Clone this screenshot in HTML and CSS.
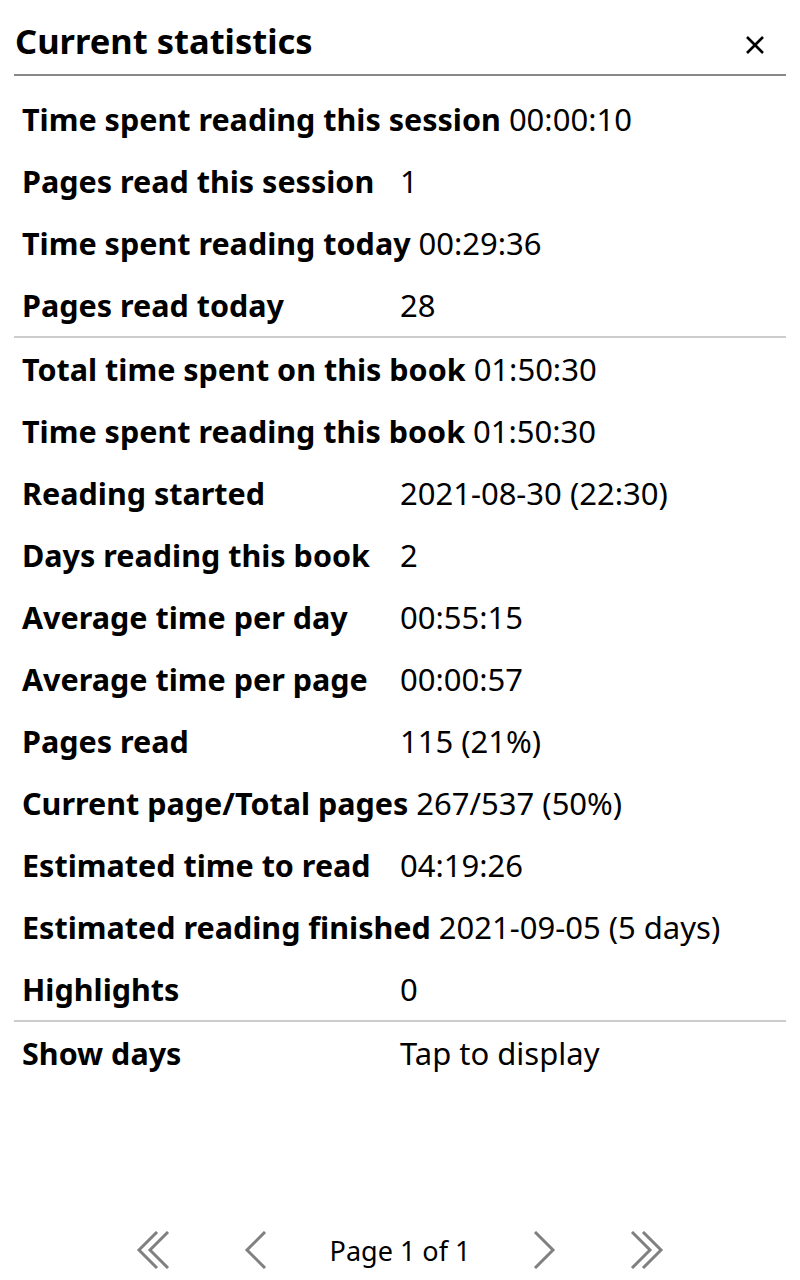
FILE: index.html
```html
<!DOCTYPE html>
<html>
<head>
<meta charset="utf-8">
<link rel="stylesheet" href="styles.css">
</head>
<body>
<div class="page">
  <div class="header">
    <div class="title">Current statistics</div>
    <div class="close">
      <svg width="20" height="20" viewBox="0 0 20 20"><path d="M2 2 L18 18 M18 2 L2 18" stroke="#000" stroke-width="2.6" fill="none"/></svg>
    </div>
  </div>
  <div class="list">
    <div class="group">
      <div class="row"><span class="label">Time spent reading this session</span><span class="value">00:00:10</span></div>
      <div class="row"><span class="label">Pages read this session</span><span class="value">1</span></div>
      <div class="row"><span class="label">Time spent reading today</span><span class="value">00:29:36</span></div>
      <div class="row"><span class="label">Pages read today</span><span class="value">28</span></div>
    </div>
    <div class="group">
      <div class="row"><span class="label">Total time spent on this book</span><span class="value">01:50:30</span></div>
      <div class="row"><span class="label">Time spent reading this book</span><span class="value">01:50:30</span></div>
      <div class="row"><span class="label">Reading started</span><span class="value">2021-08-30 (22:30)</span></div>
      <div class="row"><span class="label">Days reading this book</span><span class="value">2</span></div>
      <div class="row"><span class="label">Average time per day</span><span class="value">00:55:15</span></div>
      <div class="row"><span class="label">Average time per page</span><span class="value">00:00:57</span></div>
      <div class="row"><span class="label">Pages read</span><span class="value">115 (21%)</span></div>
      <div class="row"><span class="label">Current page/Total pages</span><span class="value">267/537 (50%)</span></div>
      <div class="row"><span class="label">Estimated time to read</span><span class="value">04:19:26</span></div>
      <div class="row"><span class="label">Estimated reading finished</span><span class="value">2021-09-05 (5 days)</span></div>
      <div class="row"><span class="label">Highlights</span><span class="value">0</span></div>
    </div>
    <div class="group">
      <div class="row"><span class="label">Show days</span><span class="value">Tap to display</span></div>
    </div>
  </div>
  <div class="footer">
    <div class="nav">
      <svg width="34" height="38" viewBox="0 0 34 38"><path d="M21 1 L3 19 L21 37 M32 1 L14 19 L32 37" stroke="#808080" stroke-width="3" fill="none"/></svg>
    </div>
    <div class="nav">
      <svg width="24" height="38" viewBox="0 0 24 38"><path d="M22 1 L4 19 L22 37" stroke="#808080" stroke-width="3" fill="none"/></svg>
    </div>
    <div class="pageinfo">Page 1 of 1</div>
    <div class="nav">
      <svg width="24" height="38" viewBox="0 0 24 38"><path d="M2 1 L20 19 L2 37" stroke="#808080" stroke-width="3" fill="none"/></svg>
    </div>
    <div class="nav">
      <svg width="34" height="38" viewBox="0 0 34 38"><path d="M2 1 L20 19 L2 37 M13 1 L31 19 L13 37" stroke="#808080" stroke-width="3" fill="none"/></svg>
    </div>
  </div>
</div>
</body>
</html>
```

FILE: styles.css
```css
html, body {
  margin: 0;
  padding: 0;
  background: #fff;
}
body {
  font-family: "Noto Sans", "DejaVu Sans", sans-serif;
  color: #000;
}
.page {
  width: 800px;
  height: 1280px;
  display: flex;
  flex-direction: column;
  overflow: hidden;
}
.header {
  margin: 0 14px;
  height: 74px;
  border-bottom: 2px solid #888;
  display: flex;
  align-items: center;
  justify-content: space-between;
}
.title {
  font-weight: 700;
  font-size: 34.5px;
  padding-left: 1px;
  padding-top: 6px;
}
.close {
  width: 20px;
  height: 20px;
  margin-right: 21px;
  margin-top: 16px;
  display: flex;
}
.list {
  margin: 0 14px;
  padding-top: 12px;
}
.group + .group {
  border-top: 2px solid #ccc;
}
.row {
  height: 62px;
  display: flex;
  align-items: center;
  padding-left: 8px;
  font-size: 31px;
  white-space: nowrap;
}
.label {
  font-weight: 700;
  font-size: 30.5px;
  min-width: 378px;
  padding-right: 8px;
  box-sizing: border-box;
}
.value {
  font-weight: 400;
}
.footer {
  margin-top: auto;
  height: 60px;
  display: flex;
  justify-content: center;
  align-items: center;
}
.nav {
  width: 102px;
  display: flex;
  justify-content: center;
  align-items: center;
}
.pageinfo {
  width: 188px;
  text-align: center;
  font-size: 27px;
}
```
